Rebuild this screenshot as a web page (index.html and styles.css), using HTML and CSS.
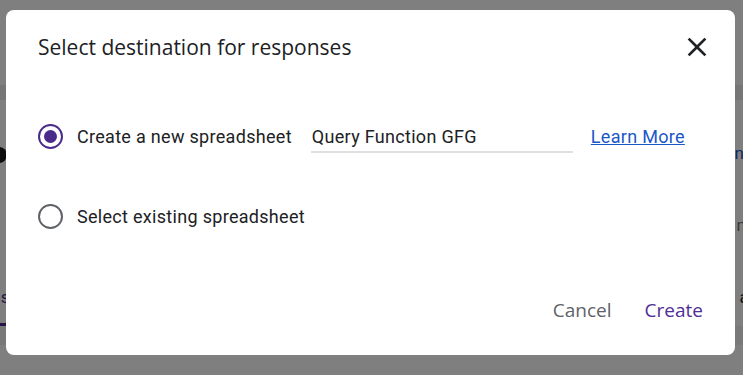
FILE: index.html
```html
<!DOCTYPE html>
<html>
<head>
<meta charset="utf-8">
<link rel="stylesheet" href="styles.css">
</head>
<body>
<div class="page">
  <div class="page-top"></div>
  <div class="page-band"></div>
  <div class="page-row row-a">
    <span class="avatar"></span>
    <span class="frag link-frag">ne</span>
  </div>
  <div class="page-row row-b">
    <span class="frag gray-frag">n</span>
  </div>
  <div class="page-row row-c">
    <span class="frag tab-frag">Questions</span>
    <span class="frag dark-frag">al</span>
  </div>
  <div class="page-row row-d">
    <span class="tab-line"></span>
  </div>
  <div class="page-band2"></div>
</div>
<div class="scrim"></div>
<div class="dialog" role="dialog">
  <div class="dlg-head">
    <h1 class="dlg-title">Select destination for responses</h1>
    <button class="close" aria-label="Close">
      <svg viewBox="0 0 24 24"><path d="M19 6.41 17.59 5 12 10.59 6.41 5 5 6.41 10.59 12 5 17.59 6.41 19 12 13.41 17.59 19 19 17.59 13.41 12z" fill="#202124"/></svg>
    </button>
  </div>
  <div class="options">
    <div class="opt">
      <span class="radio checked"><span class="dot"></span></span>
      <span class="opt-label">Create a new spreadsheet</span>
      <span class="field">Query Function GFG</span>
      <a class="learn" href="#">Learn More</a>
    </div>
    <div class="opt">
      <span class="radio"></span>
      <span class="opt-label">Select existing spreadsheet</span>
    </div>
  </div>
  <div class="actions">
    <button class="btn cancel">Cancel</button>
    <button class="btn create">Create</button>
  </div>
</div>
</body>
</html>
```
FILE: styles.css
```css
* { box-sizing: border-box; }
html, body { margin: 0; padding: 0; }
body {
  width: 743px;
  height: 375px;
  overflow: hidden;
  background: #fff;
  font-family: Roboto, "Liberation Sans", sans-serif;
  position: relative;
}
.page { display: flex; flex-direction: column; width: 743px; height: 375px; }
.page-top { height: 85px; flex: none; }
.page-band { height: 15px; background: #ececec; flex: none; }
.page-row { display: flex; align-items: center; justify-content: space-between; flex: none; }
.row-a { height: 105px; }
.row-b { height: 40px; }
.row-c { height: 78px; align-items: flex-end; padding-bottom: 16px; }
.row-d { height: 3px; }
.page-band2 { height: 19px; background: #f3f3f3; flex: none; }
.avatar { width: 16px; height: 16px; border-radius: 50%; background: #1a1a1a; margin-left: -9px; margin-top: 5px; }
.frag { font-size: 17px; line-height: 20px; }
.link-frag { color: #1a57c8; margin-right: -10px; }
.gray-frag { color: #777; margin-left: auto; margin-right: -3px; }
.tab-frag { color: #4a2b8c; margin-left: -67px; }
.dark-frag { color: #202124; margin-right: -10px; }
.tab-line { width: 7px; height: 3px; background: #4a2b8c; }
.scrim { position: absolute; inset: 0; background: rgba(0,0,0,0.5); }
.dialog {
  position: absolute;
  left: 6px; top: 10px;
  width: 729px; height: 345px;
  background: #fff;
  border-radius: 8px;
  padding: 22px 22px 0 32px;
  display: flex; flex-direction: column;
}
.dlg-head { display: flex; align-items: center; justify-content: space-between; height: 30px; }
.dlg-title { margin: 0; font-family: "Open Sans", Roboto, sans-serif; font-size: 21px; font-weight: 400; color: #202124; line-height: 30px; }
.close { border: 0; background: none; padding: 0; width: 32px; height: 32px; display: flex; flex: none; }
.close svg { width: 32px; height: 32px; }
.options { display: flex; flex-direction: column; gap: 54px; margin-top: 61px; padding-right: 4px; }
.opt { display: flex; align-items: center; height: 26px; }
.radio {
  width: 25px; height: 25px; border-radius: 50%;
  border: 2px solid #5f6368;
  display: flex; align-items: center; justify-content: center;
  flex: none;
}
.radio.checked { border-color: #4a2b8c; }
.dot { width: 13px; height: 13px; border-radius: 50%; background: #4a2b8c; }
.opt-label { margin-left: 14px; font-size: 18px; letter-spacing: 0.3px; color: #202124; }
.field {
  margin-left: 19px;
  width: 262px;
  font-size: 18px; letter-spacing: 0.3px; color: #202124;
  line-height: 21px;
  padding: 0 0 4px 1px;
  border-bottom: 2px solid #e0e0e0;
  margin-top: 6px;
  flex: none;
}
.learn { margin-left: 18px; font-size: 18px; letter-spacing: 0.3px; color: #1a57c8; text-decoration: underline; }
.actions { display: flex; justify-content: flex-end; gap: 33px; margin-top: auto; margin-bottom: 32px; padding-right: 10px; }
.btn { border: 0; background: none; padding: 0; font-family: "Open Sans", Roboto, sans-serif; font-size: 19px; font-weight: 500; }
.cancel { color: #5f6368; }
.create { color: #4f2e96; }
```
